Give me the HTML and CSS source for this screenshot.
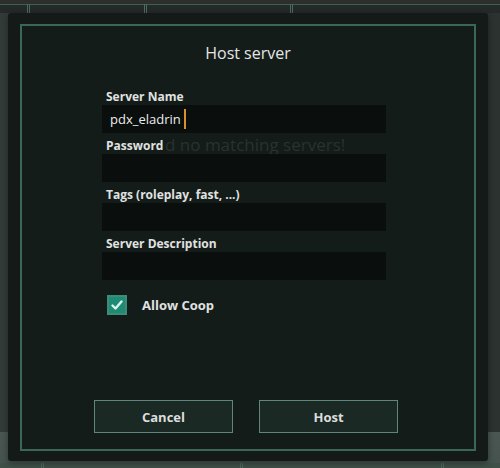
FILE: index.html
```html
<!DOCTYPE html>
<html lang="en">
<head>
    <meta charset="UTF-8">
    <meta name="viewport" content="width=device-width, initial-scale=1.0">
    <title>Host server</title>
    <link rel="stylesheet" href="styles.css">
</head>
<body>
    <!-- Server browser behind the dialog -->
    <div class="browser">
        <div class="browser-head">
            <span class="col-sep sep-a"></span>
            <span class="col-sep sep-b"></span>
            <span class="col-sep sep-c"></span>
        </div>
        <div class="browser-body"></div>
        <div class="browser-foot">
            <span class="col-sep sep-d"></span>
            <span class="col-sep sep-e"></span>
            <span class="col-sep sep-f"></span>
        </div>
    </div>

    <!-- Host server dialog -->
    <div class="modal">
        <div class="frame">
            <h1 class="title">Host server</h1>

            <div class="form">
                <!-- list message shining through the dialog -->
                <div class="ghost-text">d no matching servers!</div>

                <label class="field-label">Server Name</label>
                <div class="field">
                    <span class="field-value">pdx_eladrin</span><span class="caret"></span>
                </div>

                <label class="field-label">Password</label>
                <div class="field"></div>

                <label class="field-label">Tags (roleplay, fast, ...)</label>
                <div class="field"></div>

                <label class="field-label">Server Description</label>
                <div class="field"></div>

                <div class="check-row">
                    <span class="checkbox">
                        <svg width="14" height="14" viewBox="0 0 14 14">
                            <path d="M2.5 7.5 L5.5 10.5 L11.5 3.5" fill="none" stroke="#d9f3ec" stroke-width="2.4" stroke-linecap="round" stroke-linejoin="round"/>
                        </svg>
                    </span>
                    <span class="check-label">Allow Coop</span>
                </div>
            </div>

            <div class="button-row">
                <button class="btn">Cancel</button>
                <button class="btn">Host</button>
            </div>
        </div>
    </div>
</body>
</html>
```

FILE: styles.css
```css
* {
    margin: 0;
    padding: 0;
    box-sizing: border-box;
}

body {
    width: 500px;
    height: 468px;
    overflow: hidden;
    background: #2e3532;
    font-family: 'Open Sans', 'DejaVu Sans', sans-serif;
    color: #e2e4e3;
    position: relative;
}

/* background server list */
.browser {
    height: 468px;
    display: flex;
    flex-direction: column;
}

.browser-head {
    height: 13px;
    background: #232a27;
    border-top: 4px solid #2c2f2c;
    box-shadow: inset 0 1px 0 #3f5d53;
    position: relative;
}

.browser-body {
    flex: 1;
    background: linear-gradient(90deg, #333b38 0%, #2b3230 100%);
}

.browser-foot {
    height: 36px;
    background: linear-gradient(180deg, #4a5651 0%, #46534e 85%, #3f5049 86%, #3f5049 100%);
    position: relative;
}

.col-sep {
    position: absolute;
    top: 0;
    bottom: 0;
    width: 3px;
    border-left: 1px solid #4f6a60;
    border-right: 1px solid #4f6a60;
}

.sep-a { left: 27px; }
.sep-b { left: 144px; }
.sep-c { left: 290px; }
.sep-d { left: 41px; top: 31px; }
.sep-e { left: 240px; top: 31px; }
.sep-f { left: 441px; top: 31px; }

/* dialog */
.modal {
    position: absolute;
    left: 8px;
    top: 13px;
    width: 480px;
    height: 448px;
    background: #131a17;
    border-radius: 3px;
    padding: 11px 12px 10px 12px;
    box-shadow: 0 2px 6px rgba(0, 0, 0, 0.4);
}

.frame {
    height: 100%;
    border: 2px solid #3c665a;
    background: #141c19;
    display: flex;
    flex-direction: column;
    padding: 16px 0 16px 0;
}

.title {
    text-align: center;
    font-size: 16px;
    font-weight: 400;
    line-height: 22px;
    color: #e4e6e5;
    margin-bottom: 24px;
}

.form {
    width: 284px;
    margin-left: 80px;
    display: flex;
    flex-direction: column;
    position: relative;
}

.ghost-text {
    position: absolute;
    left: 63px;
    top: 47px;
    font-size: 17px;
    line-height: 20px;
    color: #29322f;
}

.field-label {
    display: block;
    font-size: 12px;
    font-weight: 700;
    line-height: 17px;
    color: #e0e2e1;
    padding-left: 4px;
    position: relative;
}

.field {
    height: 28px;
    background: #0a0e0d;
    margin-bottom: 4px;
    display: flex;
    align-items: center;
    padding-left: 8px;
    position: relative;
}

.field-value {
    font-size: 13px;
    color: #ececec;
}

.caret {
    width: 2px;
    height: 20px;
    background: #d8902e;
    margin-left: 3px;
}

.check-row {
    display: flex;
    align-items: center;
    gap: 15px;
    margin-top: 11px;
    padding-left: 5px;
}

.checkbox {
    width: 20px;
    height: 20px;
    border: 2px solid #3d8c78;
    background: #1f8b74;
    display: flex;
    align-items: center;
    justify-content: center;
}

.check-label {
    font-size: 13px;
    font-weight: 700;
    color: #e0e2e1;
}

.button-row {
    margin-top: auto;
    display: flex;
    gap: 26px;
    padding-left: 72px;
}

.btn {
    width: 139px;
    height: 33px;
    background: #1b2924;
    border: 1px solid #60857a;
    color: #dcdedd;
    font-family: 'Open Sans', 'DejaVu Sans', sans-serif;
    font-size: 13px;
    font-weight: 700;
    cursor: pointer;
}
```
